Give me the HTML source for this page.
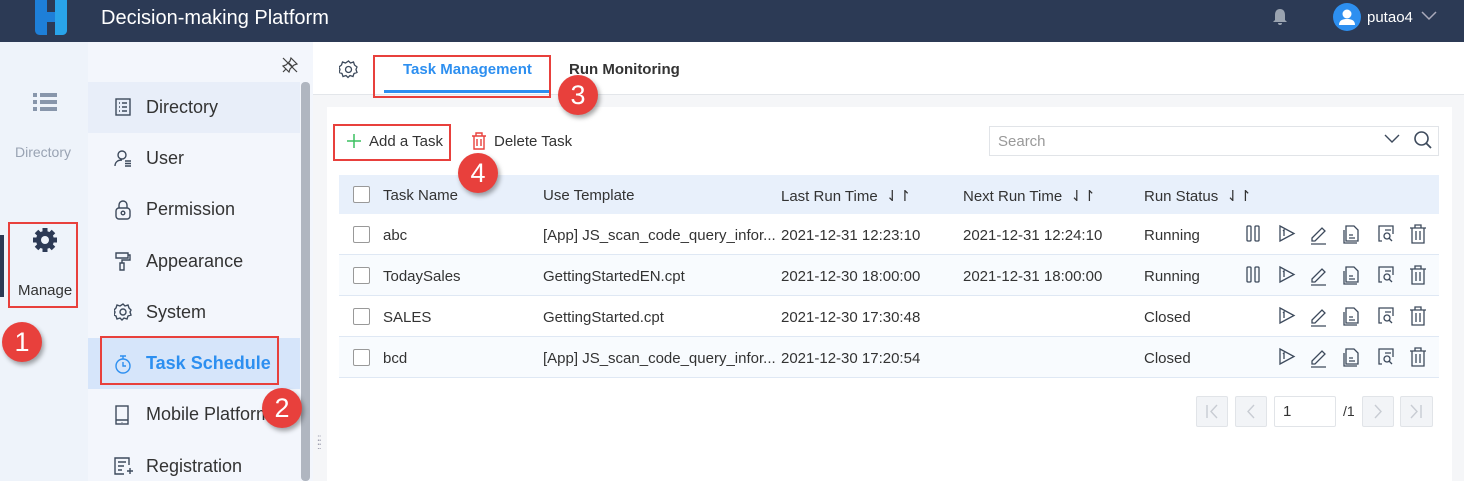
<!DOCTYPE html>
<html><head><meta charset="utf-8"><style>
*{box-sizing:border-box;margin:0;padding:0}
html,body{width:1464px;height:481px;overflow:hidden}
body{font-family:"Liberation Sans",Arial,sans-serif;background:#f5f6f8;position:relative;color:#333}
.abs{position:absolute}
.hdr{left:0;top:0;width:1464px;height:42px;background:#2c3a55}
.badge{position:absolute;z-index:10;width:40px;height:40px;border-radius:50%;background:#e8403c;color:#fff;font-size:27px;text-align:center;line-height:40px;box-shadow:2px 3px 5px rgba(0,0,0,.35)}
.red{position:absolute;z-index:5;border:2px solid #e8403c}
.nav{position:absolute;left:88px;width:212px;height:51px;font-size:18px;color:#333;line-height:51px;padding-left:58px}
.nav svg{position:absolute;left:26px;top:16px}
.th,.td{position:absolute;font-size:15px;color:#333}
.row{position:absolute;left:339px;width:1100px;height:41px;border-bottom:1px solid #dfe8f4}
.cb{position:absolute;width:17px;height:17px;border:1px solid #999;border-radius:2px;background:#fff}
.ic{position:absolute;stroke:#3d4a5c;fill:none;stroke-width:1.4}
.pg{position:absolute;top:396px;height:31px;border:1px solid #e1e4e8;background:#f2f4f7;border-radius:2px}
</style></head><body>
<div class="abs hdr"></div>
<svg class="abs" style="left:33px;top:0" width="36" height="36"><path d="M2 0h12v12h8V0h12v30c0 3-2 5-5 5H22V22h-8v13H7c-3 0-5-2-5-5z" fill="#1e7fd8"/><path d="M22 0h12v30c0 3-2 5-5 5h-7z" fill="#29a4ea"/></svg>
<div class="abs" style="left:101px;top:7px;color:#fff;font-size:20px">Decision-making Platform</div>
<svg class="abs" style="left:1272px;top:8px" width="16" height="18"><path d="M8 1c-3 0-5 2-5 6v5l-2 2h14l-2-2V7c0-4-2-6-5-6zM6 15h4a2 2 0 0 1-4 0" fill="#9aa3b0"/></svg>
<div class="abs" style="left:1333px;top:3px;width:28px;height:28px;border-radius:50%;background:#2d8ff0"><svg width="28" height="28"><circle cx="14" cy="11" r="4.5" fill="#fff"/><path d="M6 22c0-5 4-6 8-6s8 1 8 6z" fill="#fff"/></svg></div>
<div class="abs" style="left:1367px;top:9px;color:#fff;font-size:15px">putao4</div>
<svg class="abs" style="left:1421px;top:11px" width="16" height="10"><path d="M1 1l7 7 7-7" stroke="#aab" fill="none" stroke-width="1.5"/></svg>
<!-- left rail -->
<div class="abs" style="left:0;top:42px;width:88px;height:439px;background:#eef3fa"></div>
<div class="abs" style="left:0;top:235px;width:4px;height:62px;background:#2c3a55"></div>
<svg class="abs" style="left:33px;top:92px" width="24" height="20"><g fill="#8896ab"><rect x="0" y="1" width="4" height="4"/><rect x="7" y="1" width="17" height="4"/><rect x="0" y="8" width="4" height="4"/><rect x="7" y="8" width="17" height="4"/><rect x="0" y="15" width="4" height="4"/><rect x="7" y="15" width="17" height="4"/></g></svg>
<div class="abs" style="left:15px;top:144px;font-size:14px;color:#99a3b3">Directory</div>
<svg class="abs" style="left:32px;top:227px" width="26" height="26"><g fill="#2c3a55"><circle cx="13" cy="13" r="9"/><g stroke="#2c3a55" stroke-width="5"><path d="M13 1v24M1 13h24M4.5 4.5l17 17M21.5 4.5l-17 17"/></g></g><circle cx="13" cy="13" r="4" fill="#eef3fa"/></svg>
<div class="abs" style="left:18px;top:282px;font-size:15px;color:#333">Manage</div>
<div class="red" style="left:8px;top:222px;width:70px;height:86px"></div>
<!-- nav -->
<div class="abs" style="left:88px;top:42px;width:225px;height:439px;background:#f3f6fc"></div>
<svg class="abs" style="left:281px;top:56px" width="18" height="18"><path d="M5 13l-3 3M7 6l5 5M10 2l6 6-3 1-4 4-1 3-6-6 3-1 4-4z" stroke="#444" fill="none" stroke-width="1.2"/><path d="M2 2l14 14" stroke="#444" stroke-width="1.2"/></svg>
<div class="abs" style="left:301px;top:82px;width:9px;height:399px;background:#b0b6c0;border-radius:4px"></div>
<div class="nav" style="top:82px;background:#e8eef9">Directory<svg width="18" height="18" class="ic"><rect x="2" y="1" width="14" height="16"/><path d="M5 5h1M8 5h5M5 9h1M8 9h5M5 13h1M8 13h5"/></svg></div>
<div class="nav" style="top:133px">User<svg width="20" height="18" class="ic"><circle cx="8" cy="6" r="4"/><path d="M1 17c0-4 3-6 7-6M11 12h6M11 14.5h6M11 17h6"/></svg></div>
<div class="nav" style="top:184px">Permission<svg width="18" height="20" class="ic"><path d="M5 8V5a4 4 0 0 1 8 0v3"/><rect x="2" y="8" width="14" height="11" rx="3"/><circle cx="9" cy="13" r="1.8"/></svg></div>
<div class="nav" style="top:236px">Appearance<svg width="18" height="20" class="ic"><path d="M2 1h12v5H2zM14 3h2v5H8v3M6 11h4v7H6z"/></svg></div>
<div class="nav" style="top:287px">System<svg width="18" height="18" class="ic"><circle cx="9" cy="9" r="3"/><path d="M9 1l2 2 3-1 1 3 2 2-1 2 1 3-3 1-1 3-3-1-2 2-2-2-3 1-1-3-2-1 1-3-1-2 2-2 1-3 3 1z"/></svg></div>
<div class="nav" style="top:338px;background:#d6e5fa;color:#2d8ff0;font-weight:bold">Task Schedule<svg width="18" height="20" class="ic" style="stroke:#2d8ff0"><circle cx="9" cy="12" r="7"/><path d="M9 8v4h3M6 2h6M9 2v3"/></svg></div>
<div class="red" style="left:100px;top:336px;width:179px;height:49px"></div>
<div class="nav" style="top:389px">Mobile Platform<svg width="16" height="20" class="ic"><rect x="2" y="1" width="12" height="18"/><path d="M2 15h12M8 17v.5"/></svg></div>
<div class="nav" style="top:441px">Registration<svg width="20" height="18" class="ic"><path d="M15 8V1H1v16h9M4 5h8M4 9h6M4 13h4M13 14h6M16 11v6"/></svg></div>
<div class="abs" style="left:317px;top:437px;font-size:10px;color:#99a;line-height:4px;letter-spacing:-1px">::<br>::<br>::</div>
<!-- tabs -->
<div class="abs" style="left:313px;top:42px;width:1151px;height:53px;background:#fff;border-bottom:1px solid #e3e6ea"></div>
<svg class="abs" style="left:339px;top:60px" width="19" height="19"><g fill="none" stroke="#3d4a5c" stroke-width="1.3"><circle cx="9.5" cy="9.5" r="3"/><path d="M9.5 1l2 2 3-1 1 3 2.5 2-1 2.5 1 3-3 1-1 3-3-1-2 2-2-2-3 1-1-3-3-1 1-3-1-2.5 2.5-2 1-3 3 1z"/></g></svg>
<div class="abs" style="left:403px;top:61px;font-size:15px;font-weight:bold;color:#2d8ff0">Task Management</div>
<div class="abs" style="left:384px;top:90px;width:166px;height:3px;background:#2d8ff0"></div>
<div class="red" style="left:373px;top:55px;width:178px;height:43px"></div>
<div class="abs" style="left:569px;top:61px;font-size:15px;font-weight:bold;color:#333">Run Monitoring</div>
<!-- card -->
<div class="abs" style="left:327px;top:107px;width:1125px;height:374px;background:#fff"></div>
<svg class="abs" style="left:346px;top:133px" width="16" height="16"><path d="M8 1v14M1 8h14" stroke="#3cc060" stroke-width="1.5"/></svg>
<div class="abs" style="left:369px;top:133px;font-size:15px">Add a Task</div>
<div class="red" style="left:333px;top:124px;width:118px;height:37px"></div>
<svg class="abs" style="left:471px;top:132px" width="16" height="18"><g fill="none" stroke="#e8403c" stroke-width="1.4"><path d="M1 4h14M5 4V1h6v3M3 4v13h10V4M6 7v7M10 7v7"/></g></svg>
<div class="abs" style="left:494px;top:133px;font-size:15px">Delete Task</div>
<div class="abs" style="left:989px;top:126px;width:450px;height:30px;border:1px solid #e1e4e8"></div>
<div class="abs" style="left:998px;top:133px;font-size:15px;color:#999">Search</div>
<svg class="abs" style="left:1384px;top:134px" width="16" height="10"><path d="M1 1l7 7 7-7" stroke="#3d4a5c" fill="none" stroke-width="1.4"/></svg>
<svg class="abs" style="left:1413px;top:130px" width="20" height="20"><circle cx="8.5" cy="8.5" r="6.5" stroke="#3d4a5c" fill="none" stroke-width="1.6"/><path d="M13 13l5 5" stroke="#3d4a5c" stroke-width="1.8"/></svg>
<!-- table header -->
<div class="abs" style="left:339px;top:175px;width:1100px;height:39px;background:#e8f0fb"></div>
<div class="cb" style="left:353px;top:186px"></div>
<div class="th" style="left:383px;top:187px">Task Name</div>
<div class="th" style="left:543px;top:187px">Use Template</div>
<div class="th" style="left:781px;top:187px">Last Run Time &nbsp;⇃↾</div>
<div class="th" style="left:963px;top:187px">Next Run Time &nbsp;⇃↾</div>
<div class="th" style="left:1144px;top:187px">Run Status &nbsp;⇃↾</div>
<!-- rows -->
<div class="row" style="top:214px"></div>
<div class="row" style="top:255px;background:#f8fbfe"></div>
<div class="row" style="top:296px"></div>
<div class="row" style="top:337px;background:#f8fbfe"></div>
<div class="cb" style="left:353px;top:226px"></div><div class="cb" style="left:353px;top:267px"></div><div class="cb" style="left:353px;top:308px"></div><div class="cb" style="left:353px;top:349px"></div>
<div class="td" style="left:383px;top:227px">abc</div>
<div class="td" style="left:543px;top:227px">[App] JS_scan_code_query_infor...</div>
<div class="td" style="left:781px;top:227px">2021-12-31 12:23:10</div>
<div class="td" style="left:963px;top:227px">2021-12-31 12:24:10</div>
<div class="td" style="left:1144px;top:227px">Running</div>
<div class="td" style="left:383px;top:268px">TodaySales</div>
<div class="td" style="left:543px;top:268px">GettingStartedEN.cpt</div>
<div class="td" style="left:781px;top:268px">2021-12-30 18:00:00</div>
<div class="td" style="left:963px;top:268px">2021-12-31 18:00:00</div>
<div class="td" style="left:1144px;top:268px">Running</div>
<div class="td" style="left:383px;top:309px">SALES</div>
<div class="td" style="left:543px;top:309px">GettingStarted.cpt</div>
<div class="td" style="left:781px;top:309px">2021-12-30 17:30:48</div>
<div class="td" style="left:1144px;top:309px">Closed</div>
<div class="td" style="left:383px;top:350px">bcd</div>
<div class="td" style="left:543px;top:350px">[App] JS_scan_code_query_infor...</div>
<div class="td" style="left:781px;top:350px">2021-12-30 17:20:54</div>
<div class="td" style="left:1144px;top:350px">Closed</div>
<!-- action icons -->
<svg class="abs" style="left:1240px;top:220px" width="200" height="160">
<defs>
<g id="pause" fill="none" stroke="#3d4a5c" stroke-width="1.3"><rect x="7" y="6" width="4" height="15" rx="1"/><rect x="15" y="6" width="4" height="15" rx="1"/></g>
<g id="acts" fill="none" stroke="#3d4a5c" stroke-width="1.3">
<path d="M40 6v15l14-7.5z"/><path d="M43 11l1-1v6"/>
<path d="M72 18l10-10 3 3-10 10h-3zM71 24h15"/>
<path d="M104 10v13h13M106 6h8l4 4v11h-12zM109 15h4M109 18h6"/>
<path d="M142 21h-3V6h14v8M145 10h6"/><circle cx="147" cy="16" r="3"/><path d="M149 18l3 3"/>
<path d="M170 8h16M175 8V5h6v3M172 8v15h12V8M176 11v9M180 11v9"/>
</g></defs>
<use href="#pause" y="0"/><use href="#acts" y="0"/>
<use href="#pause" y="41"/><use href="#acts" y="41"/>
<use href="#acts" y="82"/><use href="#acts" y="123"/>
</svg>
<!-- pagination -->
<div class="pg" style="left:1196px;width:32px"><svg width="30" height="29"><path d="M10 8v13M20 8l-6 6.5 6 6.5" stroke="#c8ccd3" fill="none" stroke-width="1.4"/></svg></div>
<div class="pg" style="left:1235px;width:32px"><svg width="30" height="29"><path d="M18 8l-6 6.5 6 6.5" stroke="#c8ccd3" fill="none" stroke-width="1.4"/></svg></div>
<div class="pg" style="left:1274px;width:62px;background:#fff"><span style="position:absolute;left:8px;top:6px;font-size:15px">1</span></div>
<div class="abs" style="left:1343px;top:403px;font-size:14px">/1</div>
<div class="pg" style="left:1362px;width:32px"><svg width="30" height="29"><path d="M12 8l6 6.5-6 6.5" stroke="#c8ccd3" fill="none" stroke-width="1.4"/></svg></div>
<div class="pg" style="left:1400px;width:33px"><svg width="30" height="29"><path d="M10 8l6 6.5-6 6.5M20 8v13" stroke="#c8ccd3" fill="none" stroke-width="1.4"/></svg></div>
<!-- badges on top -->
<div class="badge" style="left:2px;top:322px">1</div>
<div class="badge" style="left:262px;top:388px">2</div>
<div class="badge" style="left:558px;top:75px">3</div>
<div class="badge" style="left:458px;top:153px">4</div>
</body></html>
